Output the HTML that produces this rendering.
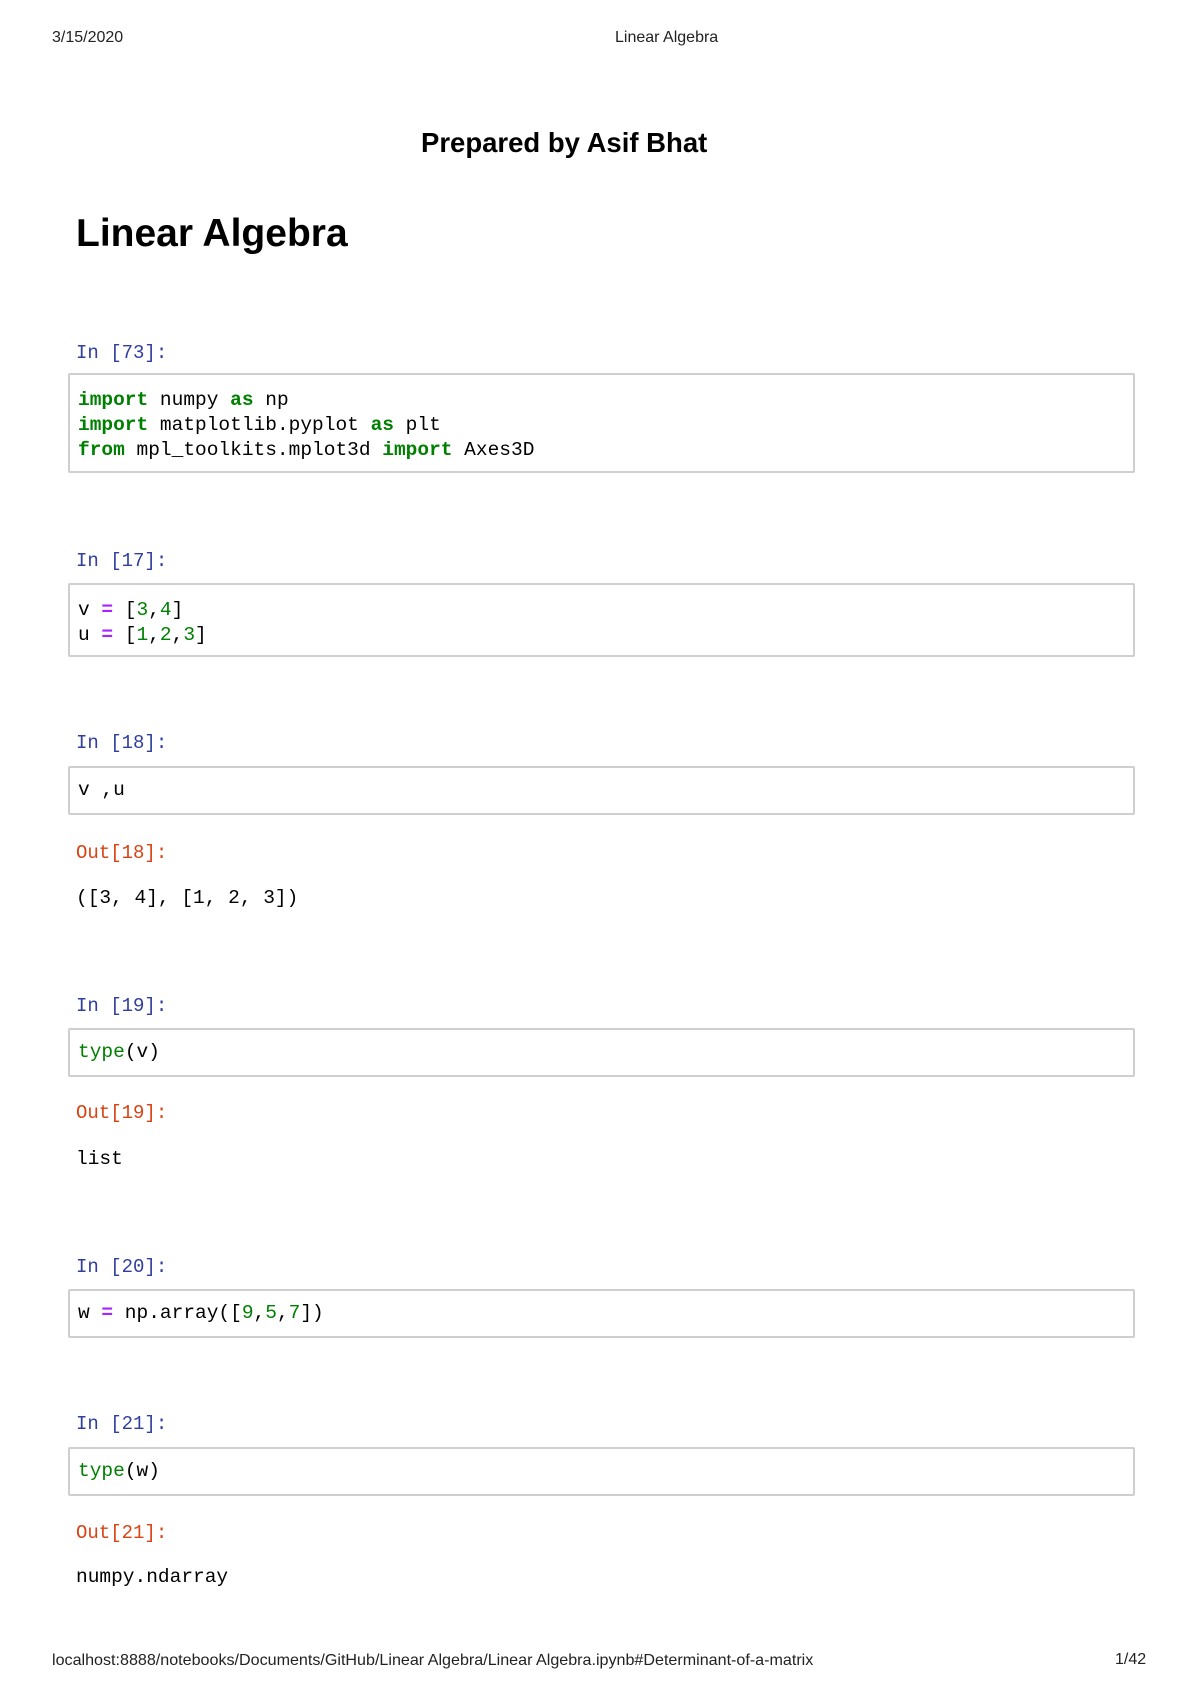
<!DOCTYPE html>
<html><head><meta charset="utf-8"><style>
html,body{margin:0;padding:0;background:#fff}
body{width:1200px;height:1698px;position:relative;overflow:hidden}
.t{position:absolute;white-space:pre;line-height:1;margin:0}
.s{font-family:"Liberation Sans",sans-serif}
.m{font-family:"Liberation Mono",monospace}
.hd{font-size:16px;color:#222}
.lab{font-size:19px;color:#303F9F}
.out{font-size:19px;color:#D84315}
.code{font-size:19.5px;color:#000}
.box{position:absolute;left:68px;width:1067px;border:2px solid #cfcfcf;border-radius:2px;box-sizing:border-box}
.k{color:#008000;font-weight:bold}
.n{color:#008000}
.o{color:#AA22FF;font-weight:bold}
</style></head><body>
<div class="t s hd" style="left:52px;top:30px">3/15/2020</div>
<div class="t s hd" style="left:615px;top:30px">Linear Algebra</div>
<div class="t s" style="left:421px;top:129px;font-size:27.5px;font-weight:bold">Prepared by Asif Bhat</div>
<div class="t s" style="left:76px;top:214px;font-size:39px;font-weight:bold">Linear Algebra</div>

<div class="t m lab" style="left:76px;top:344px">In [73]:</div>
<div class="box" style="top:373px;height:100px"></div>
<div class="t m code" style="left:78px;top:388px;line-height:25px"><span class="k">import</span> numpy <span class="k">as</span> np
<span class="k">import</span> matplotlib.pyplot <span class="k">as</span> plt
<span class="k">from</span> mpl_toolkits.mplot3d <span class="k">import</span> Axes3D</div>

<div class="t m lab" style="left:76px;top:552px">In [17]:</div>
<div class="box" style="top:583px;height:74px"></div>
<div class="t m code" style="left:78px;top:598px;line-height:25px">v <span class="o">=</span> [<span class="n">3</span>,<span class="n">4</span>]
u <span class="o">=</span> [<span class="n">1</span>,<span class="n">2</span>,<span class="n">3</span>]</div>

<div class="t m lab" style="left:76px;top:734px">In [18]:</div>
<div class="box" style="top:766px;height:49px"></div>
<div class="t m code" style="left:78px;top:781px">v ,u</div>
<div class="t m out" style="left:76px;top:844px">Out[18]:</div>
<div class="t m code" style="left:76px;top:889px">([3, 4], [1, 2, 3])</div>

<div class="t m lab" style="left:76px;top:997px">In [19]:</div>
<div class="box" style="top:1028px;height:49px"></div>
<div class="t m code" style="left:78px;top:1043px"><span class="n">type</span>(v)</div>
<div class="t m out" style="left:76px;top:1104px">Out[19]:</div>
<div class="t m code" style="left:76px;top:1150px">list</div>

<div class="t m lab" style="left:76px;top:1258px">In [20]:</div>
<div class="box" style="top:1289px;height:49px"></div>
<div class="t m code" style="left:78px;top:1304px">w <span class="o">=</span> np.array([<span class="n">9</span>,<span class="n">5</span>,<span class="n">7</span>])</div>

<div class="t m lab" style="left:76px;top:1415px">In [21]:</div>
<div class="box" style="top:1447px;height:49px"></div>
<div class="t m code" style="left:78px;top:1462px"><span class="n">type</span>(w)</div>
<div class="t m out" style="left:76px;top:1524px">Out[21]:</div>
<div class="t m code" style="left:76px;top:1568px">numpy.ndarray</div>

<div class="t s hd" style="left:52px;top:1652px;font-size:16.1px">localhost:8888/notebooks/Documents/GitHub/Linear Algebra/Linear Algebra.ipynb#Determinant-of-a-matrix</div>
<div class="t s hd" style="left:1115px;top:1652px">1/42</div>
</body></html>
